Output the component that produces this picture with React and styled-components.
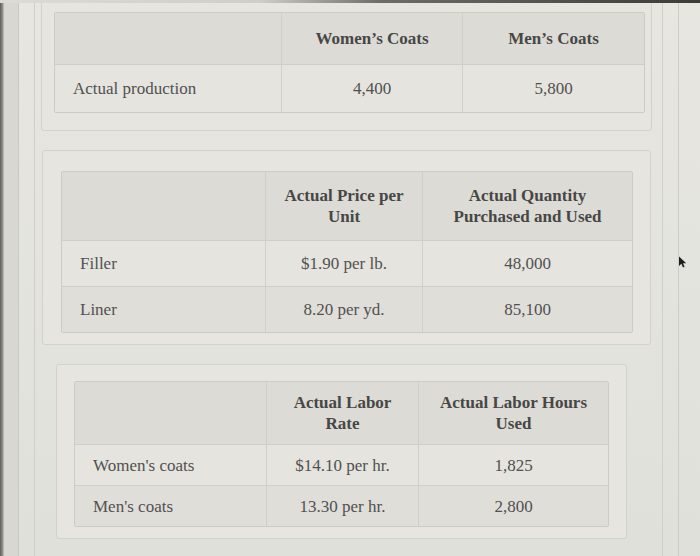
import React from "react";
import styled, { createGlobalStyle } from "styled-components";

const Global = createGlobalStyle`
  html, body { margin: 0; padding: 0; }
  body {
    width: 700px;
    height: 556px;
    overflow: hidden;
    background: #e4e3de;
    font-family: "Liberation Serif", "Times New Roman", serif;
  }
`;

const Page = styled.div`
  position: relative;
  width: 700px;
  height: 556px;
  display: flex;
  flex-direction: column;
  background: linear-gradient(180deg, #e7e6e1 0%, #e3e3de 60%, #dfe0da 100%);
`;

const TopLine = styled.div`
  height: 3px;
  flex: none;
  background: linear-gradient(90deg, #dcdbd6 0px, #cfceca 260px, #6e6d6a 380px, #3b3b3a 100%);
`;

const Body = styled.div`
  flex: 1;
  display: flex;
  overflow: hidden;
`;

const Edge = styled.div`
  width: 4px;
  flex: none;
  background: linear-gradient(90deg, #5e5d59 0, #8c8b86 60%, #c9c8c3 100%);
`;

const Gutter = styled.div`
  width: 14px;
  flex: none;
  background: #d8d7d2;
`;

const Outer = styled.div`
  flex: 1;
  margin-right: 21px;
  border-left: 1px solid #c9c8c3;
  border-right: 1px solid #cdccc7;
  display: flex;
`;

const Inner = styled.div`
  flex: 1;
  margin: 0 15px;
  border-left: 1px solid #cfcec9;
  border-right: 1px solid #d0cfca;
  display: flex;
  flex-direction: column;
`;

const Card = styled.div`
  margin: ${(p) => p.$mt}px ${(p) => p.$mr}px 0 ${(p) => p.$ml}px;
  padding: ${(p) => p.$pad};
  border: 1px solid #d2d1cc;
  border-radius: 3px;
  background: #e6e5e0;
`;

const Table = styled.div`
  display: grid;
  grid-template-columns: ${(p) => p.$cols};
  grid-template-rows: ${(p) => p.$rows};
  border: 1px solid #cccbc6;
  border-radius: 2px;
  overflow: hidden;
`;

const Cell = styled.div`
  display: flex;
  align-items: center;
  justify-content: ${(p) => (p.$left ? "flex-start" : "center")};
  text-align: ${(p) => (p.$left ? "left" : "center")};
  padding: ${(p) => (p.$left ? "0 12px 0 18px" : `0 ${p.$px || 14}px`)};
  border-right: ${(p) => (p.$lastCol ? "none" : "1px solid #d0cfca")};
  border-bottom: ${(p) => (p.$lastRow ? "none" : "1px solid #cfcec9")};
  background: ${(p) => p.$bg};
  font-size: 17px;
  line-height: 21px;
  color: ${(p) => (p.$head ? "#474745" : "#515150")};
  font-weight: ${(p) => (p.$head ? 700 : 400)};
`;

const Cursor = styled.svg`
  position: absolute;
  left: 678px;
  top: 256px;
  width: 9px;
  height: 12px;
`;

const HEAD = "#dcdbd6";
const ROW1 = "#e5e4df";
const ROW2 = "#dfdeD9";

function DataTable({ cols, rows, header, data, headPad }) {
  const total = data.length;
  return (
    <Table $cols={cols} $rows={rows}>
      {header.map((h, i) => (
        <Cell key={"h" + i} $head $bg={HEAD} $lastCol={i === 2} $px={headPad}>
          {h}
        </Cell>
      ))}
      {data.map((r, ri) =>
        r.map((v, ci) => (
          <Cell
            key={ri + "-" + ci}
            $left={ci === 0}
            $bg={ri % 2 === 0 ? ROW1 : ROW2}
            $lastCol={ci === 2}
            $lastRow={ri === total - 1}
          >
            {v}
          </Cell>
        ))
      )}
    </Table>
  );
}

export default function App() {
  return (
    <Page>
      <Global />
      <TopLine />
      <Body>
        <Edge />
        <Gutter />
        <Outer>
          <Inner>
            <Card $mt={-4} $ml={6} $mr={10} $pad="12px 6px 17px 12px">
              <DataTable
                cols="227px 181px 1fr"
                rows="52px 47px"
                header={["", "Women’s Coats", "Men’s Coats"]}
                data={[["Actual production", "4,400", "5,800"]]}
              />
            </Card>
            <Card $mt={19} $ml={7} $mr={11} $pad="20px 17px 11px 18px">
              <DataTable
                cols="204px 157px 1fr"
                rows="69px 46px 45px"
                headPad={18}
                header={["", "Actual Price per Unit", "Actual Quantity Purchased and Used"]}
                data={[
                  ["Filler", "$1.90 per lb.", "48,000"],
                  ["Liner", "8.20 per yd.", "85,100"],
                ]}
              />
            </Card>
            <Card $mt={19} $ml={21} $mr={35} $pad="16px 17px 11px 17px">
              <DataTable
                cols="192px 152px 1fr"
                rows="63px 41px 40px"
                headPad={16}
                header={["", "Actual Labor Rate", "Actual Labor Hours Used"]}
                data={[
                  ["Women's coats", "$14.10 per hr.", "1,825"],
                  ["Men's coats", "13.30 per hr.", "2,800"],
                ]}
              />
            </Card>
          </Inner>
        </Outer>
      </Body>
      <Cursor viewBox="0 0 9 12">
        <path d="M1 0.5 L1 10 L3.4 7.8 L5 11.5 L6.6 10.8 L5 7.3 L8.2 7.2 Z" fill="#1d1d1d" />
      </Cursor>
    </Page>
  );
}
